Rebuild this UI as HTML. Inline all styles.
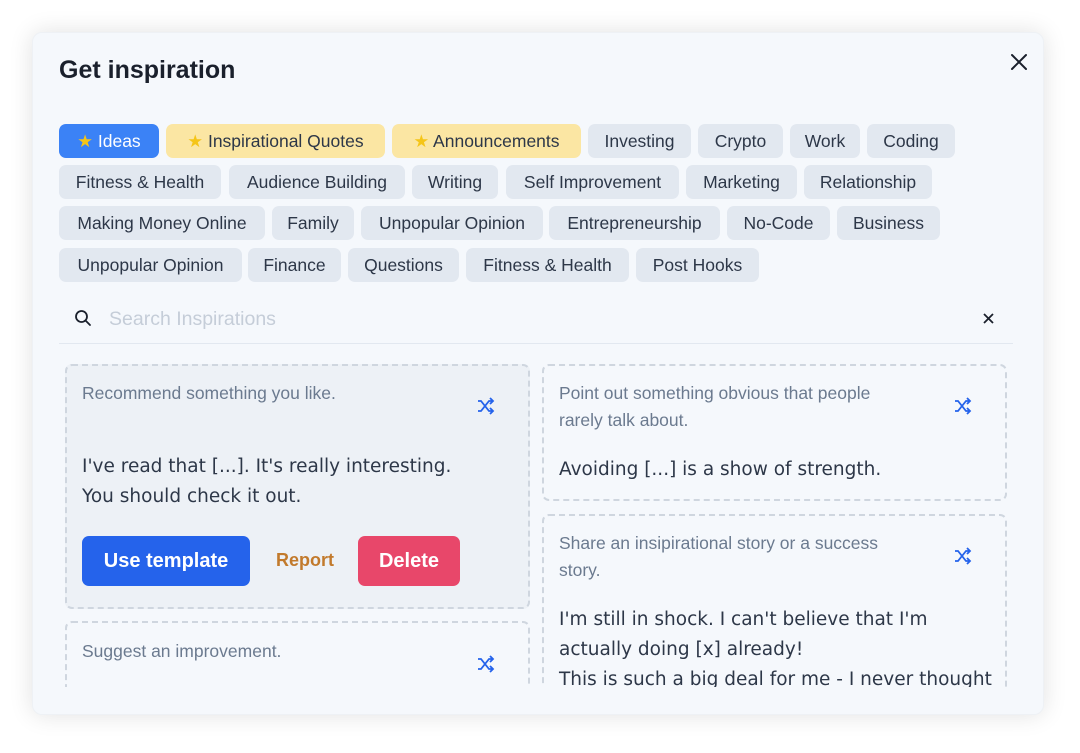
<!DOCTYPE html>
<html><head><style>
*{box-sizing:border-box;margin:0;padding:0}
body{width:1080px;height:753px;background:#fff;font-family:"Liberation Sans",sans-serif;position:relative;overflow:hidden}
.modal{position:absolute;left:32px;top:32px;width:1012px;height:683px;background:#f5f8fc;border-radius:10px;box-shadow:0 0 24px rgba(0,0,0,.12);border:1px solid #eef1f5}
h1{position:absolute;left:59px;top:56px;font-size:25px;font-weight:bold;color:#1a202c}
.close{position:absolute;left:1009px;top:52px}
.chip{position:absolute;height:34px;line-height:34px;border-radius:7px;background:#e2e8f0;color:#2d3748;font-size:17.5px;text-align:center;white-space:nowrap}
.y{background:#fbe6a3}
.b{background:#3b82f6;color:#fff}
.star{color:#f5c518}
.search{position:absolute;left:59px;top:300px;width:954px;height:44px;border-bottom:1px solid #e2e8f0}
.card{position:absolute;border:2px dashed #cfd6df;border-radius:7px}
.hd{position:absolute;font-size:17.5px;color:#6b7a8f;line-height:27px}
.bd{position:absolute;color:#2d3748;line-height:30px;font-family:"DejaVu Sans","Liberation Sans",sans-serif;font-size:18.5px}
.sh{position:absolute}
.btn{position:absolute;height:50px;line-height:50px;border-radius:7px;color:#fff;font-weight:bold;font-size:20px;text-align:center}
</style></head><body>
<div class="modal"></div>
<h1>Get inspiration</h1>
<svg class="close" width="20" height="20" viewBox="0 0 20 20"><path d="M3 3L17 17M17 3L3 17" stroke="#1a202c" stroke-width="2" stroke-linecap="round"/></svg>

<div class="chip b" style="left:59px;top:124px;width:100px"><span class="star">★</span> Ideas</div>
<div class="chip y" style="left:166px;top:124px;width:219px"><span class="star">★</span> Inspirational Quotes</div>
<div class="chip y" style="left:392px;top:124px;width:189px"><span class="star">★</span> Announcements</div>
<div class="chip" style="left:588px;top:124px;width:103px">Investing</div>
<div class="chip" style="left:698px;top:124px;width:85px">Crypto</div>
<div class="chip" style="left:790px;top:124px;width:70px">Work</div>
<div class="chip" style="left:867px;top:124px;width:88px">Coding</div>

<div class="chip" style="left:59px;top:165px;width:162px">Fitness &amp; Health</div>
<div class="chip" style="left:229px;top:165px;width:176px">Audience Building</div>
<div class="chip" style="left:412px;top:165px;width:86px">Writing</div>
<div class="chip" style="left:506px;top:165px;width:173px">Self Improvement</div>
<div class="chip" style="left:686px;top:165px;width:111px">Marketing</div>
<div class="chip" style="left:804px;top:165px;width:128px">Relationship</div>

<div class="chip" style="left:59px;top:206px;width:206px">Making Money Online</div>
<div class="chip" style="left:272px;top:206px;width:82px">Family</div>
<div class="chip" style="left:361px;top:206px;width:182px">Unpopular Opinion</div>
<div class="chip" style="left:549px;top:206px;width:171px">Entrepreneurship</div>
<div class="chip" style="left:727px;top:206px;width:103px">No-Code</div>
<div class="chip" style="left:837px;top:206px;width:103px">Business</div>

<div class="chip" style="left:59px;top:248px;width:183px">Unpopular Opinion</div>
<div class="chip" style="left:248px;top:248px;width:93px">Finance</div>
<div class="chip" style="left:348px;top:248px;width:111px">Questions</div>
<div class="chip" style="left:466px;top:248px;width:163px">Fitness &amp; Health</div>
<div class="chip" style="left:636px;top:248px;width:123px">Post Hooks</div>

<div class="search"></div>
<svg style="position:absolute;left:74px;top:309px" width="18" height="18" viewBox="0 0 18 18"><circle cx="7.5" cy="7.5" r="5.5" stroke="#1a202c" stroke-width="1.8" fill="none"/><path d="M11.5 11.5L16 16" stroke="#1a202c" stroke-width="1.8" stroke-linecap="round"/></svg>
<div style="position:absolute;left:109px;top:308px;font-size:19.5px;color:#c5cdd8">Search Inspirations</div>
<svg style="position:absolute;left:983px;top:313px" width="11" height="11" viewBox="0 0 11 11"><path d="M1 1L10 10M10 1L1 10" stroke="#1a202c" stroke-width="1.8"/></svg>

<div style="position:absolute;left:0;top:0;width:1080px;height:687px;overflow:hidden">
<div class="card" style="left:65px;top:364px;width:465px;height:245px;background:#edf1f6"></div>
<div class="hd" style="left:82px;top:380px">Recommend something you like.</div>
<div class="bd" style="left:82px;top:452px">I've read that [...]. It's really interesting.<br>You should check it out.</div>
<div class="btn" style="left:82px;top:536px;width:168px;background:#2563eb">Use template</div>
<div style="position:absolute;left:276px;top:550px;font-size:18px;font-weight:bold;color:#c27a2c">Report</div>
<div class="btn" style="left:358px;top:536px;width:102px;background:#e8476a">Delete</div>

<div class="card" style="left:65px;top:621px;width:465px;height:120px"></div>
<div class="hd" style="left:82px;top:638px">Suggest an improvement.</div>

<div class="card" style="left:542px;top:364px;width:465px;height:137px"></div>
<div class="hd" style="left:559px;top:380px;width:345px">Point out something obvious that people rarely talk about.</div>
<div class="bd" style="left:559px;top:455px">Avoiding [...] is a show of strength.</div>

<div class="card" style="left:542px;top:514px;width:465px;height:240px"></div>
<div class="hd" style="left:559px;top:530px;width:345px">Share an insipirational story or a success story.</div>
<div class="bd" style="left:559px;top:605px;width:440px">I'm still in shock. I can't believe that I'm<br>actually doing [x] already!<br>This is such a big deal for me - I never thought</div>

<svg class="sh" style="left:477px;top:397px" width="18" height="18" viewBox="0 0 18 18"><path d="M1 4h3l8 10h4M1 14h3l8-10h4M13 1l3 3-3 3M13 11l3 3-3 3" stroke="#2563eb" stroke-width="1.8" fill="none"/></svg>
<svg class="sh" style="left:477px;top:655px" width="18" height="18" viewBox="0 0 18 18"><path d="M1 4h3l8 10h4M1 14h3l8-10h4M13 1l3 3-3 3M13 11l3 3-3 3" stroke="#2563eb" stroke-width="1.8" fill="none"/></svg>
<svg class="sh" style="left:954px;top:397px" width="18" height="18" viewBox="0 0 18 18"><path d="M1 4h3l8 10h4M1 14h3l8-10h4M13 1l3 3-3 3M13 11l3 3-3 3" stroke="#2563eb" stroke-width="1.8" fill="none"/></svg>
<svg class="sh" style="left:954px;top:547px" width="18" height="18" viewBox="0 0 18 18"><path d="M1 4h3l8 10h4M1 14h3l8-10h4M13 1l3 3-3 3M13 11l3 3-3 3" stroke="#2563eb" stroke-width="1.8" fill="none"/></svg>
</div>
</body></html>
